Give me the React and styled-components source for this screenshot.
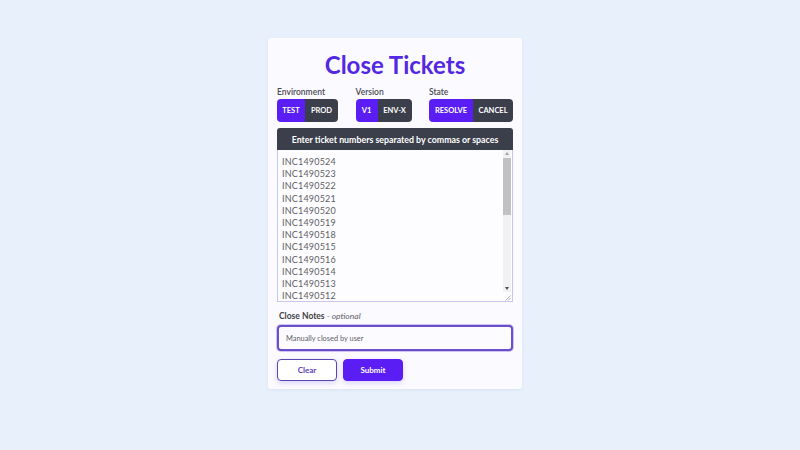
import React from "react";
import styled, { createGlobalStyle } from "styled-components";

const Global = createGlobalStyle`
  html, body { margin: 0; padding: 0; }
  body {
    background: #e8f0fb;
    font-family: Lato, "Open Sans", sans-serif;
    width: 800px;
    height: 450px;
    overflow: hidden;
  }
  * { box-sizing: border-box; }
`;

const Page = styled.div`
  display: flex;
  justify-content: center;
  padding-top: 38px;
  padding-right: 10px;
`;

const Card = styled.div`
  width: 254px;
  background: #fbfaff;
  border-radius: 2px;
  box-shadow: 0 1px 3px rgba(120, 130, 170, 0.12);
  padding: 9px 9px 8px 9px;
  display: flex;
  flex-direction: column;
`;

const Title = styled.h1`
  margin: 0;
  text-align: center;
  font-family: Lato, sans-serif;
  font-weight: 700;
  font-size: 24px;
  line-height: 36px;
  color: #5328e2;
`;

const Options = styled.div`
  display: flex;
  gap: 17.5px;
  margin-top: 3px;
`;

const OptionGroup = styled.div`
  display: flex;
  flex-direction: column;
  gap: 3px;
`;

const Label = styled.div`
  font-size: 8.5px;
  line-height: 10px;
  margin-top: 1px;
  margin-bottom: -1px;
  color: #4a4a52;
  font-weight: 600;
`;

const Toggle = styled.div`
  display: flex;
  border-radius: 4px;
  overflow: hidden;
  height: 23px;
`;

const ToggleBtn = styled.div`
  display: flex;
  align-items: center;
  justify-content: center;
  width: ${(p) => p.$w}px;
  white-space: nowrap;
  font-size: 7.5px;
  font-weight: 700;
  color: #ffffff;
  background: ${(p) => (p.$active ? "#5a1ef4" : "#3b3e4b")};
`;

const TicketBox = styled.div`
  margin-top: 6px;
  display: flex;
  flex-direction: column;
`;

const BoxHeader = styled.div`
  height: 22px;
  background: #3b3f4b;
  border-radius: 3px 3px 0 0;
  color: #ffffff;
  font-size: 8.8px;
  font-weight: 700;
  display: flex;
  align-items: center;
  justify-content: center;
`;

const TextFrame = styled.div`
  display: flex;
  height: 152px;
  border: 1px solid #c9c5ec;
  border-top: none;
  background: #fdfcff;
`;

const TextArea = styled.textarea`
  flex: 1;
  min-width: 0;
  height: 100%;
  margin: 0;
  border: none;
  background: transparent;
  padding: 6px 4px 0 4px;
  font-family: Lato, sans-serif;
  font-size: 9px;
  line-height: 12.2px;
  letter-spacing: 0.2px;
  color: #5e5e63;
  resize: none;
  outline: none;
  overflow: hidden;
`;

const ScrollBar = styled.div`
  width: 8px;
  margin-right: 1px;
  display: flex;
  flex-direction: column;
  background: #f1f1f1;
`;

const Arrow = styled.div`
  height: 7px;
  display: flex;
  align-items: center;
  justify-content: center;
  &::before {
    content: "";
    width: 0;
    height: 0;
    border-left: 2.5px solid transparent;
    border-right: 2.5px solid transparent;
    ${(p) =>
      p.$down
        ? "border-top: 3px solid #505050;"
        : "border-bottom: 3px solid #a3a3a3;"}
  }
`;

const Track = styled.div`
  flex: 1;
  padding-top: 1px;
`;

const Thumb = styled.div`
  height: 57px;
  background: #c1c1c1;
`;

const Grip = styled.div`
  height: 9px;
  display: flex;
  align-items: flex-end;
  justify-content: flex-end;
  background: #fdfcff;
`;

const NotesLabel = styled.div`
  margin-top: 9px;
  padding-left: 2px;
  font-size: 8.5px;
  line-height: 11px;
  color: #3f3f45;
  font-weight: 700;
`;

const Optional = styled.span`
  font-weight: 400;
  font-style: italic;
  color: #60606a;
`;

const NotesInput = styled.input`
  margin-top: 3px;
  width: 100%;
  height: 26px;
  border: 2px solid #6a4fcb;
  border-radius: 4px;
  box-shadow: 0 0 0 1px #cdc3f2;
  background: #fcfbff;
  padding: 0 7px;
  font-family: Lato, sans-serif;
  font-size: 7.4px;
  color: #333;
  outline: none;
  &::placeholder { color: #5d5d66; }
`;

const Actions = styled.div`
  display: flex;
  gap: 6px;
  margin-top: 8px;
`;

const Button = styled.button`
  width: 60px;
  height: 22px;
  border-radius: 4px;
  font-family: Lato, sans-serif;
  font-size: 8px;
  font-weight: 700;
  cursor: pointer;
  border: 1.5px solid ${(p) => (p.$primary ? "#5a1ef4" : "#5a45b0")};
  background: ${(p) => (p.$primary ? "#5a1ef4" : "#ffffff")};
  color: ${(p) => (p.$primary ? "#ffffff" : "#5a3fb5")};
  box-shadow: 0 2px 5px rgba(110, 80, 230, 0.22);
`;

const tickets = [
  "INC1490524", "INC1490523", "INC1490522", "INC1490521", "INC1490520",
  "INC1490519", "INC1490518", "INC1490515", "INC1490516", "INC1490514",
  "INC1490513", "INC1490512", "INC1490511", "INC1490510", "INC1490509",
  "INC1490508", "INC1490507", "INC1490506", "INC1490505", "INC1490504",
  "INC1490503", "INC1490502", "INC1490501", "INC1490500", "INC1490499",
  "INC1490498", "INC1490497",
];

export default function App() {
  return (
    <>
      <Global />
      <Page>
        <Card>
          <Title>Close Tickets</Title>
          <Options>
            <OptionGroup>
              <Label>Environment</Label>
              <Toggle>
                <ToggleBtn $active $w={28}>TEST</ToggleBtn>
                <ToggleBtn $w={33}>PROD</ToggleBtn>
              </Toggle>
            </OptionGroup>
            <OptionGroup>
              <Label>Version</Label>
              <Toggle>
                <ToggleBtn $active $w={22}>V1</ToggleBtn>
                <ToggleBtn $w={34}>ENV-X</ToggleBtn>
              </Toggle>
            </OptionGroup>
            <OptionGroup>
              <Label>State</Label>
              <Toggle>
                <ToggleBtn $active $w={44}>RESOLVE</ToggleBtn>
                <ToggleBtn $w={40}>CANCEL</ToggleBtn>
              </Toggle>
            </OptionGroup>
          </Options>
          <TicketBox>
            <BoxHeader>Enter ticket numbers separated by commas or spaces</BoxHeader>
            <TextFrame>
              <TextArea defaultValue={tickets.join("\n")} spellCheck={false} />
              <ScrollBar>
                <Arrow />
                <Track>
                  <Thumb />
                </Track>
                <Arrow $down />
                <Grip>
                  <svg width="7" height="7" viewBox="0 0 7 7">
                    <path d="M6.5 1.5 L1.5 6.5 M6.5 4 L4 6.5" stroke="#9a9a9a" strokeWidth="0.8" />
                  </svg>
                </Grip>
              </ScrollBar>
            </TextFrame>
          </TicketBox>
          <NotesLabel>
            Close Notes <Optional>- optional</Optional>
          </NotesLabel>
          <NotesInput placeholder="Manually closed by user" />
          <Actions>
            <Button>Clear</Button>
            <Button $primary>Submit</Button>
          </Actions>
        </Card>
      </Page>
    </>
  );
}
